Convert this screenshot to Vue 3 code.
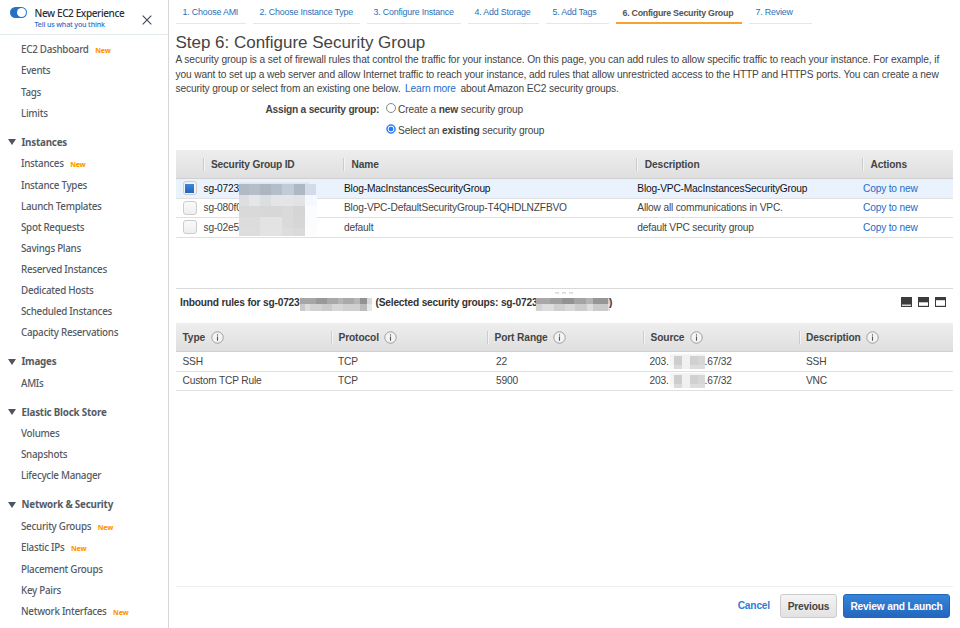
<script setup>
const sections = [
  {
    title: '',
    items: [{ label: 'EC2 Dashboard', isNew: true }, { label: 'Events' }, { label: 'Tags' }, { label: 'Limits' }],
  },
  {
    title: 'Instances',
    items: [
      { label: 'Instances', isNew: true },
      { label: 'Instance Types' },
      { label: 'Launch Templates' },
      { label: 'Spot Requests' },
      { label: 'Savings Plans' },
      { label: 'Reserved Instances' },
      { label: 'Dedicated Hosts' },
      { label: 'Scheduled Instances' },
      { label: 'Capacity Reservations' },
    ],
  },
  { title: 'Images', items: [{ label: 'AMIs' }] },
  {
    title: 'Elastic Block Store',
    items: [{ label: 'Volumes' }, { label: 'Snapshots' }, { label: 'Lifecycle Manager' }],
  },
  {
    title: 'Network & Security',
    items: [
      { label: 'Security Groups', isNew: true },
      { label: 'Elastic IPs', isNew: true },
      { label: 'Placement Groups' },
      { label: 'Key Pairs' },
      { label: 'Network Interfaces', isNew: true },
    ],
  },
]

const steps = [
  { label: '1. Choose AMI', width: 70 },
  { label: '2. Choose Instance Type', width: 107 },
  { label: '3. Configure Instance', width: 94 },
  { label: '4. Add Storage', width: 71 },
  { label: '5. Add Tags', width: 63 },
  { label: '6. Configure Security Group', width: 126, active: true },
  { label: '7. Review', width: 63 },
]

const groups = [
  { id: 'sg-0723', name: 'Blog-MacInstancesSecurityGroup', description: 'Blog-VPC-MacInstancesSecurityGroup', selected: true },
  { id: 'sg-080f0', name: 'Blog-VPC-DefaultSecurityGroup-T4QHDLNZFBVO', description: 'Allow all communications in VPC.' },
  { id: 'sg-02e5', name: 'default', description: 'default VPC security group' },
]

const ruleColumns = ['Type', 'Protocol', 'Port Range', 'Source', 'Description']
const rules = [
  { type: 'SSH', protocol: 'TCP', port: '22', description: 'SSH' },
  { type: 'Custom TCP Rule', protocol: 'TCP', port: '5900', description: 'VNC' },
]

// Masked identifiers: each row is [y, height, [x, width, colour]...]
const idMask = [
  [0, 2, [0, 70, '#e0e7f1'], [70, 8, '#eaf1fb']],
  [2, 11, [0, 10, '#b1b9c5'], [10, 11, '#b5bdc9'], [21, 11, '#adb5c0'], [32, 11, '#b4bdca'], [43, 12, '#c2cad6'], [55, 11, '#aeb7c4'], [66, 11, '#d3dbe8']],
  [13, 11, [0, 10, '#dddedf'], [10, 11, '#e4e6e8'], [21, 11, '#dcdfe0'], [32, 22, '#e3e5e7'], [54, 12, '#e2e3e5'], [66, 12, '#f4f9ff']],
  [24, 11, [0, 21, '#d9d9d9'], [21, 22, '#d7d7d7'], [43, 11, '#dadada'], [54, 12, '#d5d5d5'], [66, 12, '#fafcfe']],
  [35, 11, [0, 21, '#dcdcdc'], [21, 22, '#e3e3e3'], [43, 11, '#dadada'], [54, 12, '#d6d6d6'], [66, 12, '#fcfcfc']],
  [46, 8, [0, 21, '#dddddd'], [21, 22, '#e3e3e3'], [43, 11, '#dddddd'], [54, 12, '#dadada'], [66, 12, '#fdfdfd']],
]
const titleMaskA = [
  [0, 6, [0, 16, '#a6a6a6'], [16, 11, '#999999'], [27, 11, '#a9a9a9'], [38, 5, '#b6b6b6'], [43, 11, '#aaaaaa'], [54, 6, '#b7b7b7'], [60, 7, '#929292'], [67, 5, '#d9d9d9']],
  [6, 7, [0, 5, '#c9c9c9'], [5, 5, '#dddddd'], [10, 12, '#d2d2d2'], [22, 10, '#cbcbcb'], [32, 11, '#d7d7d7'], [43, 17, '#d0d0d0'], [60, 7, '#bbbbbb'], [67, 5, '#e8e8e8']],
]
const titleMaskB = [
  [0, 6, [0, 14, '#a8a8a8'], [14, 12, '#9f9f9f'], [26, 12, '#929292'], [38, 12, '#a4a4a4'], [50, 7, '#b4b4b4'], [57, 15, '#969696'], [72, 2, '#d0d0d0']],
  [6, 7, [0, 6, '#d2d2d2'], [6, 12, '#dddddd'], [18, 11, '#cfcfcf'], [29, 10, '#d8d8d8'], [39, 12, '#cccccc'], [51, 6, '#dddddd'], [57, 15, '#cacaca'], [72, 2, '#e2e2e2']],
]
const ipMask = [
  [0, 2, [0, 35, '#f3f3f3']],
  [2, 9, [0, 4, '#f4f4f4'], [4, 8, '#cdcdcd'], [12, 8, '#f1f1f1'], [20, 8, '#d0d0d0'], [28, 7, '#d6d6d6']],
  [11, 4, [0, 4, '#f8f8f8'], [4, 8, '#dadada'], [12, 8, '#f0f0f0'], [20, 15, '#dcdcdc']],
]

function rects(mask) {
  return mask.flatMap(([y, h, ...cells]) => cells.map(([x, w, fill]) => ({ x, y, w, h, fill })))
}
</script>

<template>
  <div class="page">
    <aside class="sidebar">
      <header class="brand">
        <span class="toggle"><i></i></span>
        <div class="brand-text">
          <strong>New EC2 Experience</strong>
          <a>Tell us what you think</a>
        </div>
        <svg class="close" viewBox="0 0 10 10"><path d="M.7.7 9.3 9.3M9.3.7.7 9.3" /></svg>
      </header>
      <nav>
        <section v-for="(s, i) in sections" :key="i">
          <h2 v-if="s.title">
            <svg class="caret" viewBox="0 0 8 6"><path d="M0 0h8L4 6z" /></svg>{{ s.title }}
          </h2>
          <ul>
            <li v-for="item in s.items" :key="item.label" :class="{ tall: item.isNew }">
              {{ item.label }}<em v-if="item.isNew">New</em>
            </li>
          </ul>
        </section>
      </nav>
    </aside>

    <main>
      <ol class="steps">
        <li v-for="s in steps" :key="s.label" :class="{ active: s.active }" :style="{ width: s.width + 'px' }">
          {{ s.label }}
        </li>
      </ol>

      <h1>Step 6: Configure Security Group</h1>
      <p class="intro">
        <span>A security group is a set of firewall rules that control the traffic for your instance. On this page, you can add rules to allow specific traffic to reach your instance. For example, if</span>
        <span>you want to set up a web server and allow Internet traffic to reach your instance, add rules that allow unrestricted access to the HTTP and HTTPS ports. You can create a new</span>
        <span>security group or select from an existing one below. <a>Learn more</a> about Amazon EC2 security groups.</span>
      </p>

      <div class="assign">
        <strong>Assign a security group:</strong>
        <div class="options">
          <label><i class="radio"></i><span>Create a <b>new</b> security group</span></label>
          <label><i class="radio on"></i><span>Select an <b>existing</b> security group</span></label>
        </div>
      </div>

      <div class="groups">
        <div class="row head">
          <span></span><span>Security Group ID</span><span>Name</span><span>Description</span><span>Actions</span>
        </div>
        <div v-for="g in groups" :key="g.id" class="row" :class="{ selected: g.selected }">
          <i class="check"></i>
          <span>{{ g.id }}</span>
          <span>{{ g.name }}</span>
          <span>{{ g.description }}</span>
          <a>Copy to new</a>
        </div>
        <svg class="id-mask" width="78" height="54" shape-rendering="crispEdges">
          <rect v-for="(r, i) in rects(idMask)" :key="i" :x="r.x" :y="r.y" :width="r.w" :height="r.h" :fill="r.fill" />
        </svg>
      </div>

      <div class="splitter"><i></i><i></i><i></i></div>

      <div class="panel-title">
        <span class="t1">Inbound rules for sg-0723</span>
        <svg width="72" height="13" shape-rendering="crispEdges">
          <rect v-for="(r, i) in rects(titleMaskA)" :key="i" :x="r.x" :y="r.y" :width="r.w" :height="r.h" :fill="r.fill" />
        </svg>
        <span class="t2">(Selected security groups: sg-0723</span>
        <svg width="74" height="13" shape-rendering="crispEdges">
          <rect v-for="(r, i) in rects(titleMaskB)" :key="i" :x="r.x" :y="r.y" :width="r.w" :height="r.h" :fill="r.fill" />
        </svg>
        <span class="t3">)</span>
        <div class="layouts">
          <svg viewBox="0 0 11 10"><path class="solid" d="M0 0h11v10H0z" /><path class="hole" d="M1 7.6h9v1.2H1z" /></svg>
          <svg viewBox="0 0 11 10"><path class="solid" d="M0 0h11v10H0z" /><path class="hole" d="M1 5.3h9v3.5H1z" /></svg>
          <svg viewBox="0 0 11 10"><path class="solid" d="M0 0h11v10H0z" /><path class="hole" d="M1 3.2h9v5.6H1z" /></svg>
        </div>
      </div>

      <div class="rules">
        <div class="row head">
          <span v-for="c in ruleColumns" :key="c">
            {{ c }}
            <svg class="info" viewBox="0 0 13 13">
              <circle cx="6.5" cy="6.5" r="5.7" />
              <path d="M6.5 3.2v1.3M6.5 5.5v4.2" />
            </svg>
          </span>
        </div>
        <div v-for="r in rules" :key="r.type" class="row">
          <span>{{ r.type }}</span>
          <span>{{ r.protocol }}</span>
          <span>{{ r.port }}</span>
          <span class="ip">
            <b>203.</b>
            <svg width="35" height="15" shape-rendering="crispEdges">
              <rect v-for="(c, i) in rects(ipMask)" :key="i" :x="c.x" :y="c.y" :width="c.w" :height="c.h" :fill="c.fill" />
            </svg>
            .67/32
          </span>
          <span>{{ r.description }}</span>
        </div>
      </div>

      <footer>
        <a>Cancel</a>
        <button class="previous">Previous</button>
        <button class="launch">Review and Launch</button>
      </footer>
    </main>
  </div>
</template>

<style>
body {
  background: #fff;
}
</style>

<style scoped>
* {
  box-sizing: border-box;
}
.page {
  display: flex;
  width: 960px;
  height: 628px;
  overflow: hidden;
  background: #fff;
  color: #444;
  font-family: 'Liberation Sans', Arial, sans-serif;
  font-size: 10.2px;
  letter-spacing: -0.18px;
  white-space: nowrap;
}
ul,
ol,
h1,
h2,
p {
  margin: 0;
  padding: 0;
  list-style: none;
}
a {
  color: #1f6cc9;
}

/* Sidebar */
.sidebar {
  width: 169px;
  flex: none;
  border-right: 1px solid #d5d7d7;
  color: #545b64;
  font-family: 'Noto Sans', sans-serif;
  font-size: 9.8px;
  letter-spacing: -0.27px;
}
.brand {
  display: flex;
  align-items: flex-start;
  height: 35px;
  padding: 7px 0 0 10px;
  border-bottom: 1px solid #e3eaea;
}
.toggle {
  display: flex;
  justify-content: flex-end;
  width: 17px;
  height: 11px;
  padding: 1px;
  border-radius: 6px;
  background: #2671c4;
}
.toggle i {
  width: 9px;
  height: 9px;
  border-radius: 50%;
  background: #fff;
}
.brand-text {
  display: flex;
  flex-direction: column;
  width: 107.5px;
  margin-left: 7.5px;
}
.brand strong {
  color: #2b3036;
  font-size: 10px;
  font-weight: 500;
  letter-spacing: -0.38px;
  line-height: 12px;
}
.brand a {
  font-size: 7.1px;
  font-weight: 500;
  letter-spacing: -0.15px;
  line-height: 10px;
}
.close {
  width: 10px;
  height: 10px;
  margin-top: 7.5px;
  fill: none;
  stroke: #454d57;
  stroke-width: 1.2;
}
nav {
  padding-top: 3.8px;
}
h2 {
  display: flex;
  align-items: center;
  height: 21.8px;
  margin-top: 7.5px;
  padding-left: 8px;
  font-size: 9.8px;
  font-weight: 700;
  letter-spacing: -0.21px;
}
.caret {
  width: 8px;
  height: 6px;
  margin-right: 5.5px;
  fill: #4c545e;
}
nav li {
  height: 21.1px;
  padding-left: 21px;
  font-weight: 500;
  line-height: 21.1px;
}
nav li.tall {
  height: 21.7px;
  line-height: 21.7px;
}
em {
  margin-left: 6.5px;
  color: #ff9900;
  font-size: 7px;
  font-style: normal;
  font-weight: 800;
  letter-spacing: -0.2px;
}

/* Wizard */
main {
  display: flex;
  flex-direction: column;
  width: 784.5px;
  padding: 0 0 0 6.5px;
}
main > * {
  width: 777.5px;
  flex: none;
}
.steps {
  display: flex;
  gap: 7px;
}
.steps li {
  flex: none;
  height: 24px;
  padding-left: 7px;
  border-bottom: 1.5px solid #e6e6e6;
  color: #2a70b8;
  font-size: 8.9px;
  letter-spacing: -0.2px;
  line-height: 25px;
}
.steps .active {
  border-bottom: 2px solid #f5a431;
  color: #555;
  font-weight: 700;
  letter-spacing: -0.28px;
  line-height: 26px;
}
h1 {
  height: 29px;
  color: #444;
  font-size: 17px;
  font-weight: 400;
  letter-spacing: -0.02px;
  line-height: 38px;
}
.intro {
  height: 44px;
  letter-spacing: -0.1px;
  line-height: 14.7px;
}
.intro span {
  display: block;
}
.intro span:nth-child(2) {
  letter-spacing: -0.12px;
}
.intro span:last-child {
  letter-spacing: -0.13px;
}
.intro a {
  margin: 0 2px;
}
.assign {
  display: flex;
  height: 53px;
  padding: 5px 0 0 90px;
  line-height: 16px;
}
.assign > strong {
  width: 120px;
  letter-spacing: -0.24px;
}
.options label {
  display: flex;
  height: 21px;
  letter-spacing: -0.13px;
}
.radio {
  width: 10px;
  height: 10px;
  margin: 1px 2.5px 0 0;
  border: 1px solid #888;
  border-radius: 50%;
  background: #fff;
}
.radio.on {
  border: 1px solid #5b9bf8;
  background: radial-gradient(circle, #2878f0 0 2px, #fff 2.7px 3px, #2878f0 3.7px);
}

/* Tables */
.row {
  display: grid;
  align-items: center;
  height: 19.5px;
  border-bottom: 1px solid #e0e0e0;
}
.head {
  height: 29px;
  border-bottom: 1px solid #cfcfcf;
  background: linear-gradient(#eee, #dfdfdf);
  font-weight: 700;
  letter-spacing: -0.12px;
}
.head span {
  display: flex;
  align-items: center;
  height: 13px;
}
.head span + span {
  border-left: 1px solid #ccc;
  box-shadow: inset 1px 0 #f4f4f4;
}
.groups {
  position: relative;
  height: 138px;
}
.groups .row {
  grid-template-columns: 28px 140.5px 293.3px 225.7px 1fr;
}
.groups .head span + span {
  margin-left: -1px;
  padding-left: 7.5px;
}
.groups .head span:nth-child(2) {
  letter-spacing: -0.18px;
}
.row.selected {
  background: #eaf2fe;
  color: #111;
}
.check {
  width: 14px;
  height: 14px;
  margin-left: 7px;
  border: 1px solid #ccc;
  border-radius: 3px;
  background: linear-gradient(#fafafa, #eee);
}
.selected .check {
  background: linear-gradient(#3b86dc, #2463b8) center / 9px 9px no-repeat, #f0f2f5;
}
.id-mask {
  position: absolute;
  top: 32px;
  left: 63.5px;
}
.splitter {
  display: flex;
  justify-content: center;
  gap: 3px;
  height: 8px;
  padding-top: 3px;
  border-top: 1px solid #d9d9d9;
}
.splitter i {
  width: 4px;
  height: 2px;
  border: 1px solid #ccc;
  border-bottom: 0;
  border-radius: 2px 2px 0 0;
}
.panel-title {
  display: flex;
  align-items: flex-start;
  height: 27px;
  padding-left: 4.5px;
  color: #333;
  font-weight: 700;
  letter-spacing: -0.2px;
  line-height: 13px;
}
.panel-title > svg {
  margin-top: 2px;
}
.t1 {
  width: 120px;
}
.t2 {
  width: 164px;
  padding-left: 3.5px;
}
.t3 {
  margin-left: -1px;
}
.layouts {
  display: flex;
  gap: 6px;
  margin: 1px 7px 0 auto;
}
.layouts svg {
  width: 11px;
  height: 10px;
}
.solid {
  fill: #3c3c3c;
}
.hole {
  fill: #fff;
}
.rules .row {
  grid-template-columns: 155.5px 156px 156px 155.5px 1fr;
}
.rules .row > span {
  padding-left: 7px;
}
.rules .head > span + span {
  padding-left: 6.5px;
}
.rules .row:not(.head) > span:nth-child(3) {
  padding-left: 9px;
}
.rules .row:not(.head) > span:nth-child(5) {
  padding-left: 7.5px;
}
.info {
  width: 13px;
  height: 13px;
  margin-left: 5.5px;
  fill: #f4f4f4;
  stroke: #8c8c8c;
  stroke-width: 0.8;
}
.info path {
  stroke: #555;
  stroke-width: 1.1;
}
.rules .row > .ip {
  display: flex;
  align-items: center;
  padding-left: 6.5px;
}
.ip b {
  width: 20px;
  font-weight: 400;
}

/* Footer */
footer {
  display: flex;
  align-items: flex-start;
  justify-content: flex-end;
  height: 42px;
  margin-top: auto;
  padding: 7px 3px 0 0;
  border-top: 1px solid #eee;
  font-weight: 700;
}
footer a {
  margin-right: 10px;
  color: #2b7ddb;
  line-height: 24px;
}
button {
  height: 24px;
  padding: 0;
  border-radius: 3px;
  font: inherit;
  letter-spacing: -0.17px;
}
.previous {
  width: 57px;
  margin-right: 6px;
  border: 1px solid #ccc;
  background: linear-gradient(#f4f4f4, #e2e2e2);
  color: #444;
}
.launch {
  width: 107px;
  border: 1px solid #2566b5;
  background: linear-gradient(#3585da, #2466bd);
  color: #fff;
}
</style>
